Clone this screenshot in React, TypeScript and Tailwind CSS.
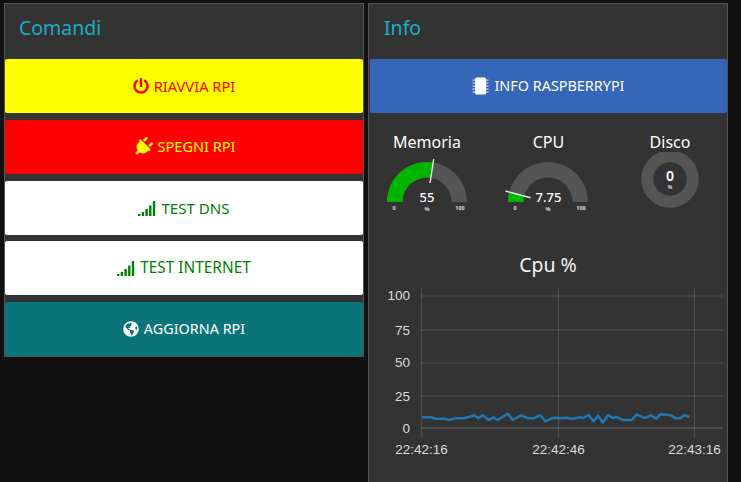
import React from "react";
import { FaPowerOff, FaPlug, FaGlobeAmericas } from "react-icons/fa";

const Signal = () => (
  <svg width="18" height="15" viewBox="0 0 18 15" className="shrink-0" fill="currentColor">
    <rect x="0" y="13" width="2.4" height="2" />
    <rect x="3.7" y="11" width="2.4" height="4" />
    <rect x="7.4" y="8" width="2.4" height="7" />
    <rect x="11.1" y="4.5" width="2.4" height="10.5" />
    <rect x="14.8" y="0" width="2.4" height="15" />
  </svg>
);

const Chip = () => (
  <svg width="17" height="18" viewBox="0 0 17 18" className="shrink-0" fill="#ffffff">
    <rect x="3" y="0.5" width="11" height="17" rx="1.5" />
    {[2.5, 5.5, 8.5, 11.5, 14.5].map((y) => (
      <g key={y} fillOpacity="0.75">
        <rect x="0.5" y={y} width="2.5" height="1.2" />
        <rect x="14" y={y} width="2.5" height="1.2" />
      </g>
    ))}
  </svg>
);

type BtnProps = { cls: string; icon: React.ReactNode; label: string };
const Btn = ({ cls, icon, label }: BtnProps) => (
  <button className={"h-[54px] w-full rounded-[2px] flex items-center justify-center gap-[5px] " + cls}>
    {icon}
    <span>{label}</span>
  </button>
);

const sector = (cx: number, cy: number, ro: number, ri: number, a0: number, a1: number) => {
  const p = (r: number, a: number) => {
    const t = Math.PI - (a * Math.PI) / 180;
    return `${(cx + r * Math.cos(t)).toFixed(2)} ${(cy - r * Math.sin(t)).toFixed(2)}`;
  };
  return `M${p(ro, a0)} A${ro} ${ro} 0 0 1 ${p(ro, a1)} L${p(ri, a1)} A${ri} ${ri} 0 0 0 ${p(ri, a0)} Z`;
};

type GaugeProps = { cx: number; deg: number; value: string; needle: [number, number, number, number]; valueX: number };
const Gauge = ({ cx, deg, value, needle, valueX }: GaugeProps) => (
  <svg width="100" height="62" viewBox="0 0 100 62">
    <path d={sector(cx, 50, 40, 24.5, 0, 180)} fill="#555555" />
    <path d={sector(cx, 50, 40, 24.5, 0, deg)} fill="#00B500" />
    <line x1={needle[0]} y1={needle[1]} x2={needle[2]} y2={needle[3]} stroke="#e8e8e8" strokeWidth="1.4" />
    <text x={valueX} y="49.5" textAnchor="middle" fontSize="13" fontWeight="500" fill="#fff">{value}</text>
    <text x={cx - 33} y="58" textAnchor="middle" fontSize="5.5" fontWeight="700" fill="#ddd">0</text>
    <text x={cx} y="58.5" textAnchor="middle" fontSize="5.5" fontWeight="700" fill="#ddd">%</text>
    <text x={cx + 33} y="58" textAnchor="middle" fontSize="5.5" fontWeight="700" fill="#ddd">100</text>
  </svg>
);

const raw1 = [[18,52],[45,52],[60,56],[85,56],[100,60],[118,55],[145,55],[175,46],[187,55],[200,46],[218,60],[232,52],[245,60],[275,41],[290,60],[316,46],[335,55],[352,55],[373,46],[388,64],[410,54]];
const raw2 = [[0,53],[10,55],[30,53],[50,56],[70,52],[82,54],[98,45],[112,64],[127,47],[140,68],[157,45],[170,54],[183,51],[200,60],[228,60],[242,43],[265,54],[285,46],[300,56],[313,43],[345,46],[358,55],[372,55],[385,46],[400,51]];
const linePoints = [
  ...raw1.map(([x, y]) => `${(415 + x / 3).toFixed(1)},${(400 + y / 3).toFixed(1)}`),
  ...raw2.map(([x, y]) => `${(555 + x / 3).toFixed(1)},${(400 + y / 3).toFixed(1)}`),
].join(" ");

const Chart = () => (
  <svg width="358" height="202" viewBox="369 280 358 202" className="block" fontFamily="'Liberation Sans', Arial, sans-serif">
    {[420.5, 557.5, 693.5].map((x) => (
      <line key={x} x1={x} x2={x} y1="288" y2="438" stroke="#ffffff" strokeOpacity="0.12" strokeWidth="1.3" />
    ))}
    {[296, 330, 363, 396].map((y) => (
      <line key={y} x1="420" x2="722" y1={y} y2={y} stroke="#ffffff" strokeOpacity="0.09" strokeWidth="1.6" />
    ))}
    <line x1="420" x2="722" y1="428" y2="428" stroke="#ffffff" strokeOpacity="0.18" strokeWidth="1.6" />
    {[["100", 300], ["75", 335], ["50", 367], ["25", 401], ["0", 433]].map(([t, y]) => (
      <text key={t} x="409" y={y} textAnchor="end" fontSize="13.5" fill="#dcdcdc">{t}</text>
    ))}
    {[["22:42:16", 420.5], ["22:42:46", 557.5], ["22:43:16", 693.5]].map(([t, x]) => (
      <text key={t} x={x} y="454" textAnchor="middle" fontSize="13.5" fill="#dcdcdc">{t}</text>
    ))}
    <polyline points={linePoints} fill="none" stroke="#1f77b4" strokeWidth="2.5" strokeLinejoin="round" />
  </svg>
);

export default function App() {
  return (
    <div
      className="h-[482px] w-[741px] overflow-hidden bg-[#111111] flex items-start gap-[4px] pl-[4px] pt-[3px] text-white"
      style={{ fontFamily: "'Noto Sans', sans-serif" }}
    >
      <section className="w-[360px] h-[354px] bg-[#333333] border border-[#555555] flex flex-col">
        <h2 className="h-[55px] pl-[14px] pt-[9px] text-[19.5px] leading-[30px] text-[#17b0c5]">Comandi</h2>
        <Btn cls="text-[14.7px] bg-[#ffff00] text-[#ff0000]" icon={<FaPowerOff size={16} />} label="RIAVVIA RPI" />
        <div className="mt-[7px]">
          <Btn cls="text-[14.5px] bg-[#ff0000] text-[#ffff00]" icon={<FaPlug size={20} className="rotate-45" />} label="SPEGNI RPI" />
        </div>
        <div className="mt-[7px]">
          <Btn cls="text-[15.1px] bg-white text-[#008000]" icon={<Signal />} label="TEST DNS" />
        </div>
        <div className="mt-[6px]">
          <Btn cls="text-[15.4px] bg-white text-[#008000]" icon={<Signal />} label="TEST INTERNET" />
        </div>
        <div className="mt-[7px]">
          <Btn cls="text-[14.4px] bg-[#097479] text-white" icon={<FaGlobeAmericas size={16} />} label="AGGIORNA RPI" />
        </div>
      </section>

      <section className="w-[360px] h-[490px] bg-[#333333] border border-[#555555] flex flex-col pl-px">
        <h2 className="h-[55px] pl-[14px] pt-[9px] text-[19.5px] leading-[30px] text-[#17b0c5]">Info</h2>
        <Btn cls="text-[14.4px] bg-[#3566b8] text-white" icon={<Chip />} label="INFO RASPBERRYPI" />
        <div className="mt-[19px] px-[7px] flex justify-between">
          <div className="w-[100px] flex flex-col items-center">
            <div className="text-[16px] leading-[20px]">Memoria</div>
            <Gauge cx={50} deg={99} value="55" needle={[53, 31, 56.7, 7]} valueX={50} />
          </div>
          <div className="w-[100px] flex flex-col items-center">
            <div className="text-[16px] leading-[20px]">CPU</div>
            <Gauge cx={49} deg={13.95} value="7.75" needle={[31.5, 45.7, 6.5, 39]} valueX={49.5} />
          </div>
          <div className="w-[100px] flex flex-col items-center">
            <div className="text-[16px] leading-[20px]">Disco</div>
            <svg width="100" height="62" viewBox="0 0 100 62">
              <circle cx="50" cy="27" r="22.7" fill="none" stroke="#555555" strokeWidth="12" />
              <text x="50" y="28.5" textAnchor="middle" fontSize="14" fontWeight="600" fill="#fff">0</text>
              <text x="50" y="37" textAnchor="middle" fontSize="5" fontWeight="700" fill="#ddd">%</text>
            </svg>
          </div>
        </div>
        <div className="mt-[36px] h-[30px] text-center text-[19.5px] leading-[30px] text-[#f2f2f2] -ml-px">Cpu %</div>
        <Chart />
      </section>
    </div>
  );
}
